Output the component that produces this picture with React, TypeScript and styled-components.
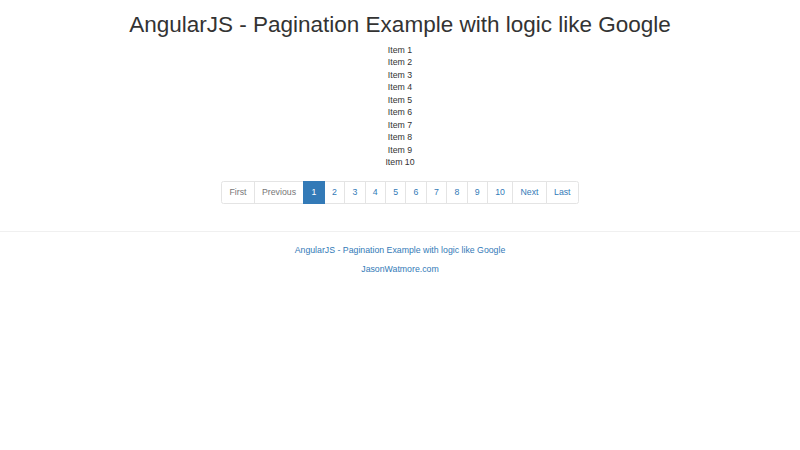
import React from "react";
import styled, { createGlobalStyle } from "styled-components";

const GlobalStyle = createGlobalStyle`
  html, body { margin: 0; padding: 0; background: #fff; }
  body {
    font-family: "Liberation Sans", Arial, Helvetica, sans-serif;
    font-size: 8.75px;
    line-height: 12.5px;
    color: #333;
  }
  * { box-sizing: border-box; }
`;

const Page = styled.div`
  display: flex;
  flex-direction: column;
  align-items: stretch;
`;

const Main = styled.div`
  display: flex;
  flex-direction: column;
  align-items: center;
  text-align: center;
`;

const Title = styled.h1`
  margin: 12.5px 0 6.25px;
  font-size: 22.5px;
  line-height: 24.75px;
  font-weight: 500;
  color: #333;
`;

const Item = styled.div`
  line-height: 12.5px;
`;

const Pager = styled.ul`
  display: flex;
  list-style: none;
  padding: 0;
  margin: 12.5px 0;
`;

const PageLink = styled.a<{ $active?: boolean; $disabled?: boolean; $first?: boolean; $last?: boolean }>`
  display: block;
  padding: 4.4px 7.28px 4.35px;
  line-height: 12.5px;
  margin-left: ${(p) => (p.$first ? "0" : "-1px")};
  border: 1px solid ${(p) => (p.$active ? "#337ab7" : "#e4e4e4")};
  background: ${(p) => (p.$active ? "#337ab7" : "#fff")};
  color: ${(p) => (p.$active ? "#fff" : p.$disabled ? "#777" : "#337ab7")};
  text-decoration: none;
  position: relative;
  z-index: ${(p) => (p.$active ? 2 : 0)};
  border-radius: ${(p) => (p.$first ? "2.5px 0 0 2.5px" : p.$last ? "0 2.5px 2.5px 0" : "0")};
  cursor: pointer;
`;

const Footer = styled.div`
  margin-top: 14px;
  border-top: 1px solid #f0f0f0;
  padding-top: 12.5px;
  text-align: center;
`;

const FooterLine = styled.p`
  margin: 0 0 6.25px;
  line-height: 12.5px;
`;

const FooterLink = styled.a`
  color: #337ab7;
  text-decoration: none;
`;

export default function App() {
  const items = Array.from({ length: 10 }, (_, i) => `Item ${i + 1}`);
  const pages = Array.from({ length: 10 }, (_, i) => i + 1);
  return (
    <>
      <GlobalStyle />
      <Page>
        <Main>
          <Title>AngularJS - Pagination Example with logic like Google</Title>
          {items.map((t) => (
            <Item key={t}>{t}</Item>
          ))}
          <Pager>
            <li>
              <PageLink $first $disabled>First</PageLink>
            </li>
            <li>
              <PageLink $disabled>Previous</PageLink>
            </li>
            {pages.map((n) => (
              <li key={n}>
                <PageLink $active={n === 1}>{n}</PageLink>
              </li>
            ))}
            <li>
              <PageLink>Next</PageLink>
            </li>
            <li>
              <PageLink $last>Last</PageLink>
            </li>
          </Pager>
        </Main>
        <Footer>
          <FooterLine>
            <FooterLink>AngularJS - Pagination Example with logic like Google</FooterLink>
          </FooterLine>
          <FooterLine>
            <FooterLink>JasonWatmore.com</FooterLink>
          </FooterLine>
        </Footer>
      </Page>
    </>
  );
}
